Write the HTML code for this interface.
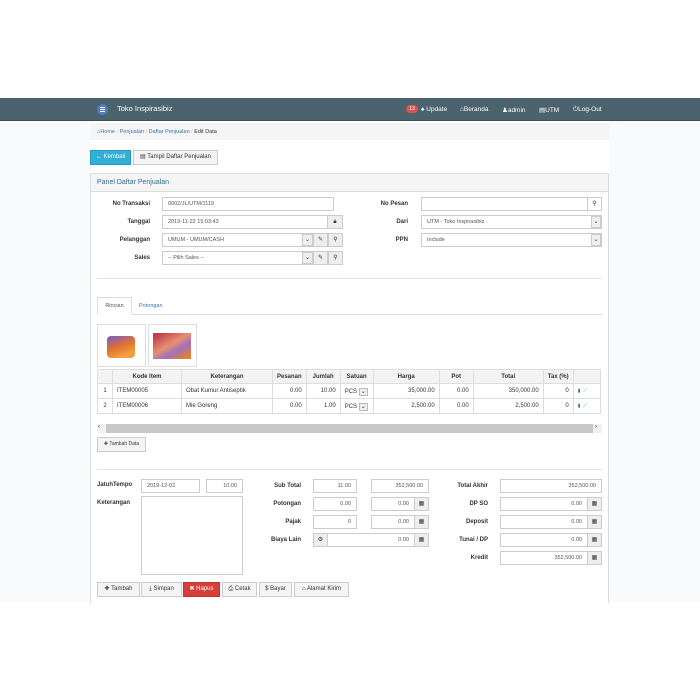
<!DOCTYPE html>
<html><head><meta charset="utf-8"><style>
*{box-sizing:border-box;margin:0;padding:0}
body{width:700px;height:700px;background:#fff;position:relative;font-family:"Liberation Sans",sans-serif;font-size:6px;color:#333;overflow:hidden}
.a{position:absolute}
.nav{left:0;top:98px;width:700px;height:23px;background:#4b636c;border-bottom:1px solid #3b4f57}
.nav span{position:absolute;color:#fff;font-size:6.5px;top:8px}
.inp{position:absolute;border:1px solid #ccc;background:#fff;height:14px;font-size:5.5px;color:#555;padding:3px 5px;white-space:nowrap;overflow:hidden}
.r{text-align:right}
.ad{position:absolute;border:1px solid #ccc;background:#eee;height:14px;width:15px;font-size:6px;text-align:center;line-height:12px;color:#333}
.lb{position:absolute;font-size:6px;font-weight:bold;color:#333;text-align:right}
.btn{position:absolute;border:1px solid #ccc;background:#f4f4f4;height:15px;font-size:6px;line-height:13px;text-align:center;color:#333}
table{position:absolute;border-collapse:collapse;left:97px;top:369px;width:504px}
td,th{border:1px solid #ddd;font-size:6px;padding:0 4px;height:15px;white-space:nowrap}
th{background:#f3f3f3;text-align:center;height:14px}
</style></head><body>
<div class="a" style="left:0;top:121px;width:700px;height:481px;background:#f8fafc"></div>
<div class="a" style="left:90px;top:121px;width:519px;height:481px;background:#fff"></div>
<div class="a nav">
<div class="a" style="left:97px;top:6px;width:11px;height:11px;border-radius:50%;background:#4a7cc7"></div>
<div class="a" style="left:100px;top:9px;width:5px;height:1px;background:#fff;box-shadow:0 2px #fff,0 4px #fff"></div>
<span style="left:117px;top:6px;font-size:7.5px">Toko Inspirasibiz</span>
<div class="a" style="left:406px;top:7px;width:12px;height:8px;border-radius:4px;background:#d9534f;color:#fff;font-size:5px;text-align:center;line-height:8px">13</div>
<span style="left:421px">♠ Update</span>
<span style="left:460px">⌂Beranda</span>
<span style="left:502px">♟admin</span>
<span style="left:539px">▤UTM</span>
<span style="left:573px">⏻Log-Out</span>
</div>
<div class="a" style="left:90px;top:123px;width:519px;height:17px;background:#f5f5f5"></div>
<div class="a" style="left:97px;top:129px;font-size:5.5px;color:#337ab7">⌂Home <span style="color:#ccc">/</span> Penjualan <span style="color:#ccc">/</span> Daftar Penjualan <span style="color:#ccc">/</span> <span style="color:#333">Edit Data</span></div>
<div class="btn" style="left:90px;top:150px;width:41px;background:#31b0d5;border-color:#269abc;color:#fff">← Kembali</div>
<div class="btn" style="left:133px;top:150px;width:85px">▤ Tampil Daftar Penjualan</div>
<div class="a" style="left:90px;top:173px;width:519px;height:430px;border:1px solid #ddd;border-bottom:none"></div>
<div class="a" style="left:91px;top:174px;width:517px;height:18px;background:#f5f5f5;border-bottom:1px solid #ddd"></div>
<div class="a" style="left:97px;top:179px;font-size:7px;color:#31708f">Panel Daftar Penjualan</div>

<div class="lb" style="left:100px;top:201px;width:50px">No Transaksi</div>
<div class="inp" style="left:162px;top:197px;width:172px">0002/JL/UTM/1119</div>
<div class="lb" style="left:100px;top:219px;width:50px">Tanggal</div>
<div class="inp" style="left:162px;top:215px;width:166px">2019-11-22 15:03:43</div><div class="ad" style="left:327px;top:215px;width:16px">🔒︎</div>
<div class="lb" style="left:100px;top:237px;width:50px">Pelanggan</div>
<div class="inp" style="left:162px;top:233px;width:152px">UMUM - UMUM/CASH</div><div class="ad" style="left:302px;top:234px;width:11px;height:12px;line-height:10px">⌄</div><div class="ad" style="left:313px;top:233px">✎</div><div class="ad" style="left:328px;top:233px">⚲</div>
<div class="lb" style="left:100px;top:255px;width:50px">Sales</div>
<div class="inp" style="left:162px;top:251px;width:152px">-- Pilih Sales --</div><div class="ad" style="left:302px;top:252px;width:11px;height:12px;line-height:10px">⌄</div><div class="ad" style="left:313px;top:251px">✎</div><div class="ad" style="left:328px;top:251px">⚲</div>

<div class="lb" style="left:360px;top:201px;width:48px">No Pesan</div>
<div class="inp" style="left:421px;top:197px;width:167px"></div><div class="ad" style="left:587px;top:197px;background:#fff">⚲</div>
<div class="lb" style="left:360px;top:219px;width:48px">Dari</div>
<div class="inp" style="left:421px;top:215px;width:181px">UTM - Toko Inspirasibiz</div><div class="ad" style="left:591px;top:216px;width:10px;height:12px;line-height:10px">⌄</div>
<div class="lb" style="left:360px;top:237px;width:48px">PPN</div>
<div class="inp" style="left:421px;top:233px;width:181px">Include</div><div class="ad" style="left:591px;top:234px;width:10px;height:12px;line-height:10px">⌄</div>

<div class="a" style="left:97px;top:278px;width:505px;height:1px;background:#dde8ee"></div>
<div class="a" style="left:97px;top:314px;width:505px;height:1px;background:#ddd"></div>
<div class="a" style="left:97px;top:297px;width:35px;height:18px;border:1px solid #ddd;border-bottom:1px solid #fff;background:#fff;font-size:5.5px;text-align:center;line-height:16px;color:#555">Rincian</div>
<div class="a" style="left:139px;top:303px;font-size:5.5px;color:#337ab7">Potongan</div>
<div class="a" style="left:97px;top:324px;width:49px;height:43px;border:1px solid #ddd"></div>
<div class="a" style="left:107px;top:336px;width:28px;height:22px;border-radius:4px;background:linear-gradient(160deg,#8a5fb0 10%,#e07030 45%,#f0a040 80%)"></div>
<div class="a" style="left:148px;top:324px;width:49px;height:43px;border:1px solid #ddd"></div>
<div class="a" style="left:153px;top:333px;width:38px;height:26px;background:linear-gradient(150deg,#c04050 10%,#e89070 45%,#a070c0 65%,#e08030 90%)"></div>

<table>
<tr><th style="width:15px"></th><th style="width:69px">Kode Item</th><th style="width:91px">Keterangan</th><th style="width:33px">Pesanan</th><th style="width:34px">Jumlah</th><th style="width:33px">Satuan</th><th style="width:66px">Harga</th><th style="width:34px">Pot</th><th style="width:70px">Total</th><th style="width:30px">Tax (%)</th><th></th></tr>
<tr><td style="text-align:center">1</td><td>ITEM00005</td><td>Obat Kumur Antiseptik</td><td class="r">0.00</td><td class="r">10.00</td><td>PCS <span style="border:1px solid #bbb;background:#eee;padding:0 1px">⌄</span></td><td class="r">35,000.00</td><td class="r">0.00</td><td class="r">350,000.00</td><td class="r">0</td><td style="color:#337ab7;font-size:5px">▮ &nbsp;⟋</td></tr>
<tr><td style="text-align:center">2</td><td>ITEM00006</td><td>Mie Goreng</td><td class="r">0.00</td><td class="r">1.00</td><td>PCS <span style="border:1px solid #bbb;background:#eee;padding:0 1px">⌄</span></td><td class="r">2,500.00</td><td class="r">0.00</td><td class="r">2,500.00</td><td class="r">0</td><td style="color:#337ab7;font-size:5px">▮ &nbsp;⟋</td></tr>
</table>
<div class="a" style="left:97px;top:424px;width:505px;height:9px;background:#f1f1f1"></div>
<div class="a" style="left:106px;top:424px;width:487px;height:9px;background:#c8c8c8"></div>
<div class="a" style="left:98px;top:424px;font-size:6px">‹</div><div class="a" style="left:595px;top:424px;font-size:6px">›</div>
<div class="btn" style="left:97px;top:437px;width:49px;font-size:5px">✚ Tambah Data</div>

<div class="a" style="left:97px;top:469px;width:505px;height:1px;background:#dde8ee"></div>
<div class="lb" style="left:97px;top:482px;text-align:left">JatuhTempo</div>
<div class="inp" style="left:141px;top:479px;width:59px">2019-12-02</div>
<div class="inp r" style="left:206px;top:479px;width:37px">10.00</div>
<div class="lb" style="left:97px;top:500px;text-align:left">Keterangan</div>
<div class="inp" style="left:141px;top:496px;width:102px;height:79px"></div>

<div class="lb" style="left:250px;top:483px;width:51px">Sub Total</div>
<div class="lb" style="left:250px;top:501px;width:51px">Potongan</div>
<div class="lb" style="left:250px;top:519px;width:51px">Pajak</div>
<div class="lb" style="left:250px;top:537px;width:51px">Biaya Lain</div>
<div class="inp r" style="left:313px;top:479px;width:44px">11.00</div>
<div class="inp r" style="left:371px;top:479px;width:58px">352,500.00</div>
<div class="inp r" style="left:313px;top:497px;width:44px">0.00</div>
<div class="inp r" style="left:371px;top:497px;width:44px">0.00</div><div class="ad" style="left:414px;top:497px">▦</div>
<div class="inp r" style="left:313px;top:515px;width:44px">0</div>
<div class="inp r" style="left:371px;top:515px;width:44px">0.00</div><div class="ad" style="left:414px;top:515px">▦</div>
<div class="ad" style="left:313px;top:533px">⚙</div>
<div class="inp r" style="left:327px;top:533px;width:88px">0.00</div><div class="ad" style="left:414px;top:533px">▦</div>

<div class="lb" style="left:440px;top:483px;width:48px">Total Akhir</div>
<div class="lb" style="left:440px;top:501px;width:48px">DP SO</div>
<div class="lb" style="left:440px;top:519px;width:48px">Deposit</div>
<div class="lb" style="left:440px;top:537px;width:48px">Tunai / DP</div>
<div class="lb" style="left:440px;top:555px;width:48px">Kredit</div>
<div class="inp r" style="left:500px;top:479px;width:102px">352,500.00</div>
<div class="inp r" style="left:500px;top:497px;width:88px">0.00</div><div class="ad" style="left:587px;top:497px">▦</div>
<div class="inp r" style="left:500px;top:515px;width:88px">0.00</div><div class="ad" style="left:587px;top:515px">▦</div>
<div class="inp r" style="left:500px;top:533px;width:88px">0.00</div><div class="ad" style="left:587px;top:533px">▦</div>
<div class="inp r" style="left:500px;top:551px;width:88px">352,500.00</div><div class="ad" style="left:587px;top:551px">▦</div>

<div class="btn" style="left:97px;top:582px;width:43px">✚ Tambah</div>
<div class="btn" style="left:141px;top:582px;width:41px">⤓ Simpan</div>
<div class="btn" style="left:183px;top:582px;width:37px;background:#d43f3a;border-color:#c9302c;color:#fff">✖ Hapus</div>
<div class="btn" style="left:222px;top:582px;width:35px">⎙ Cetak</div>
<div class="btn" style="left:259px;top:582px;width:33px">$ Bayar</div>
<div class="btn" style="left:294px;top:582px;width:55px">⌂ Alamat Kirim</div>
</body></html>
